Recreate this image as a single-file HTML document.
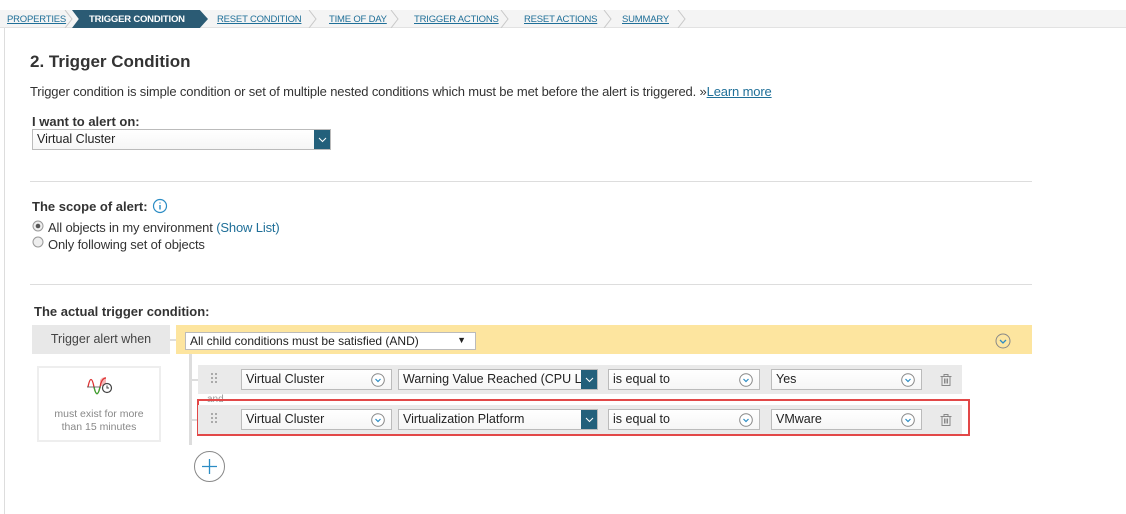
<!DOCTYPE html>
<html><head><style>
*{box-sizing:border-box;margin:0;padding:0}
body{width:1126px;height:514px;background:#fff;font-family:"Liberation Sans",Arial,sans-serif;color:#333;position:relative;overflow:hidden}
.a{position:absolute}
.nav{top:10px;left:0;width:1126px;height:18px;background:#f4f4f4;border-bottom:1px solid #e2e2e2}
.ni{position:absolute;top:4px;font-size:9.5px;color:#1f6f98;text-decoration:underline;letter-spacing:-0.2px}
.sel{position:absolute;height:21px;border:1px solid #bbb;background:linear-gradient(#fff,#f6f6f6);font-size:12.5px;padding:2px 0 0 4px;color:#222;white-space:nowrap;overflow:hidden}
.btn{position:absolute;top:-1px;right:-1px;width:17px;height:21px;background:#23607b}
.circ{position:absolute;right:6px;top:3px;width:14px;height:14px}
.row{position:absolute;left:198px;width:764px;height:29px;background:#eaeaea}
.hr{position:absolute;left:30px;width:1002px;height:1px;background:#ddd}
.lbl{position:absolute;font-size:13px;font-weight:bold;color:#333}
.txt{position:absolute;font-size:13px;color:#333;letter-spacing:-0.15px}
</style></head><body>
<svg width="0" height="0" style="position:absolute"><defs><symbol id="cc" viewBox="0 0 14 14"><circle cx="7" cy="7" r="6.3" fill="#fff" stroke="#888"/><path d="M4.5 6l2.5 2.5L9.5 6" stroke="#2b8cc4" fill="none" stroke-width="1.2"/></symbol></defs></svg>
<div class="a" style="left:4px;top:27px;width:1px;height:487px;background:#ddd"></div>
<div class="a nav">
<span class="ni" style="left:7px">PROPERTIES</span>
<div class="a" style="left:72px;top:0;width:136px;height:18px;background:#2b5b74;clip-path:polygon(0 0,94% 0,100% 50%,94% 100%,0 100%,5% 50%)"></div>
<span class="ni" style="left:89px;color:#fff;font-weight:bold;text-decoration:none">TRIGGER CONDITION</span>
<span class="ni" style="left:217px">RESET CONDITION</span>
<span class="ni" style="left:329px">TIME OF DAY</span>
<span class="ni" style="left:414px">TRIGGER ACTIONS</span>
<span class="ni" style="left:524px">RESET ACTIONS</span>
<span class="ni" style="left:622px">SUMMARY</span>
<svg class="a" style="left:0;top:0" width="700" height="18"><g fill="none" stroke="#c8c8c8" stroke-width="1"><path d="M309 0l7 9-7 9M391 0l7 9-7 9M501 0l7 9-7 9M604 0l7 9-7 9M678 0l7 9-7 9M65 0l7 9-7 9"/></g></svg>
</div>
<div class="a" style="left:30px;top:52px;font-size:17px;font-weight:bold;color:#333">2. Trigger Condition</div>
<div class="txt" style="left:30px;top:84px">Trigger condition is simple condition or set of multiple nested conditions which must be met before the alert is triggered. »<span style="color:#1f6f98;text-decoration:underline">Learn more</span></div>
<div class="lbl" style="left:32px;top:114px">I want to alert on:</div>
<div class="sel" style="left:32px;top:129px;width:299px">Virtual Cluster<div class="btn"><svg width="17" height="21"><path d="M5 9l3.5 3.5L12 9" stroke="#fff" fill="none"/></svg></div></div>
<div class="hr" style="top:181px"></div>
<div class="lbl" style="left:32px;top:199px">The scope of alert:</div>
<svg class="a" style="left:152px;top:198px" width="16" height="16"><circle cx="8" cy="8" r="6.5" fill="none" stroke="#2b8cc4" stroke-width="1.2"/><path d="M8 7v4.5M8 4.5v1" stroke="#2b8cc4" stroke-width="1.4"/></svg>
<svg class="a" style="left:32px;top:220px" width="14" height="30"><circle cx="6" cy="6" r="5" fill="#eee" stroke="#999"/><circle cx="6" cy="6" r="2.3" fill="#555"/><circle cx="6" cy="22" r="5" fill="#eee" stroke="#999"/></svg>
<div class="txt" style="left:48px;top:220px">All objects in my environment <span style="color:#1f6f98">(Show List)</span></div>
<div class="txt" style="left:48px;top:237px">Only following set of objects</div>
<div class="hr" style="top:284px"></div>
<div class="lbl" style="left:34px;top:304px">The actual trigger condition:</div>
<div class="a" style="left:32px;top:325px;width:138px;height:29px;background:#e8e8e8;font-size:12.5px;color:#444;text-align:center;padding-top:7px">Trigger alert when</div>
<div class="a" style="left:170px;top:339px;width:6px;height:2px;background:#ddd"></div>
<div class="a" style="left:176px;top:325px;width:856px;height:29px;background:#fde59f"></div>
<div class="sel" style="left:185px;top:332px;width:291px;height:18px;padding-top:1px;font-size:12px;background:#fff">All child conditions must be satisfied (AND)<span class="a" style="right:9px;top:2px;font-size:9px">▼</span></div>
<svg class="a" style="left:995px;top:333px" width="16" height="16"><circle cx="8" cy="8" r="7" fill="none" stroke="#888"/><path d="M5 7l3 3 3-3" stroke="#2b8cc4" fill="none" stroke-width="1.3"/></svg>
<div class="a" style="left:189px;top:354px;width:3px;height:91px;background:#ddd"></div>
<div class="a" style="left:192px;top:379px;width:6px;height:2px;background:#ddd"></div>
<div class="a" style="left:192px;top:419px;width:6px;height:2px;background:#ddd"></div>

<div class="a" style="left:37px;top:366px;width:124px;height:76px;border:2px solid #eee;text-align:center;font-size:10.5px;color:#888;line-height:13px;padding-top:40px">must exist for more<br>than 15 minutes</div>
<svg class="a" style="left:86px;top:376px" width="30" height="22"><path d="M14 4q2-3 6-3v9h-6z" fill="#f7b8b8"/><path d="M2 11c2-10 4-10 6 0" stroke="#d33" fill="none" stroke-width="1.3"/><path d="M8 11c2 9 4 9 6 0c1-6 3-9 6-9" stroke="#d33" fill="none" stroke-width="1.3"/><path d="M8 11c2 9 4 9 6 0" stroke="#3a3" fill="none" stroke-width="1.3"/><path d="M1 11h14" stroke="#555" stroke-width=".8"/><circle cx="21" cy="12" r="4.5" fill="#fff" stroke="#444" stroke-width="1.2"/><path d="M21 9.5V12h2" stroke="#444" fill="none"/></svg>

<div class="a" style="left:207px;top:394px;font-size:10px;color:#999">and</div>
<div class="a" style="left:197px;top:399px;width:773px;height:37px;border:2px solid #e24848"></div>

<div class="row" style="top:365px"></div>
<div class="row" style="top:405px"></div>
<svg class="a" style="left:210px;top:372px" width="10" height="60"><g fill="#aaa"><rect x="1" y="1" width="2" height="2"/><rect x="5" y="1" width="2" height="2"/><rect x="1" y="5" width="2" height="2"/><rect x="5" y="5" width="2" height="2"/><rect x="1" y="9" width="2" height="2"/><rect x="5" y="9" width="2" height="2"/><rect x="1" y="41" width="2" height="2"/><rect x="5" y="41" width="2" height="2"/><rect x="1" y="45" width="2" height="2"/><rect x="5" y="45" width="2" height="2"/><rect x="1" y="49" width="2" height="2"/><rect x="5" y="49" width="2" height="2"/></g></svg>

<div class="sel" style="left:241px;top:369px;width:151px">Virtual Cluster<svg class="circ"><use href="#cc"/></svg></div>
<div class="sel" style="left:398px;top:369px;width:200px">Warning Value Reached (CPU Load<div class="btn"><svg width="17" height="21"><path d="M5 9l3.5 3.5L12 9" stroke="#fff" fill="none"/></svg></div></div>
<div class="sel" style="left:608px;top:369px;width:152px">is equal to<svg class="circ"><use href="#cc"/></svg></div>
<div class="sel" style="left:771px;top:369px;width:151px">Yes<svg class="circ"><use href="#cc"/></svg></div>

<div class="sel" style="left:241px;top:409px;width:151px">Virtual Cluster<svg class="circ"><use href="#cc"/></svg></div>
<div class="sel" style="left:398px;top:409px;width:200px">Virtualization Platform<div class="btn"><svg width="17" height="21"><path d="M5 9l3.5 3.5L12 9" stroke="#fff" fill="none"/></svg></div></div>
<div class="sel" style="left:608px;top:409px;width:152px">is equal to<svg class="circ"><use href="#cc"/></svg></div>
<div class="sel" style="left:771px;top:409px;width:151px">VMware<svg class="circ"><use href="#cc"/></svg></div>

<svg class="a" style="left:939px;top:373px" width="14" height="54"><g fill="none" stroke="#888"><path d="M1.5 3.5h11M5 3.5V1.5h4v2M3 3.5v9h8v-9M5.5 5.5v5M7 5.5v5M8.5 5.5v5"/><path d="M1.5 43.5h11M5 43.5V41.5h4v2M3 43.5v9h8v-9M5.5 45.5v5M7 45.5v5M8.5 45.5v5"/></g></svg>

<svg class="a" style="left:193px;top:450px" width="34" height="34"><circle cx="16.5" cy="16.5" r="15" fill="#fff" stroke="#888"/><path d="M16.5 9v15M9 16.5h15" stroke="#2b8cc4" stroke-width="1.3"/></svg>
</body></html>
